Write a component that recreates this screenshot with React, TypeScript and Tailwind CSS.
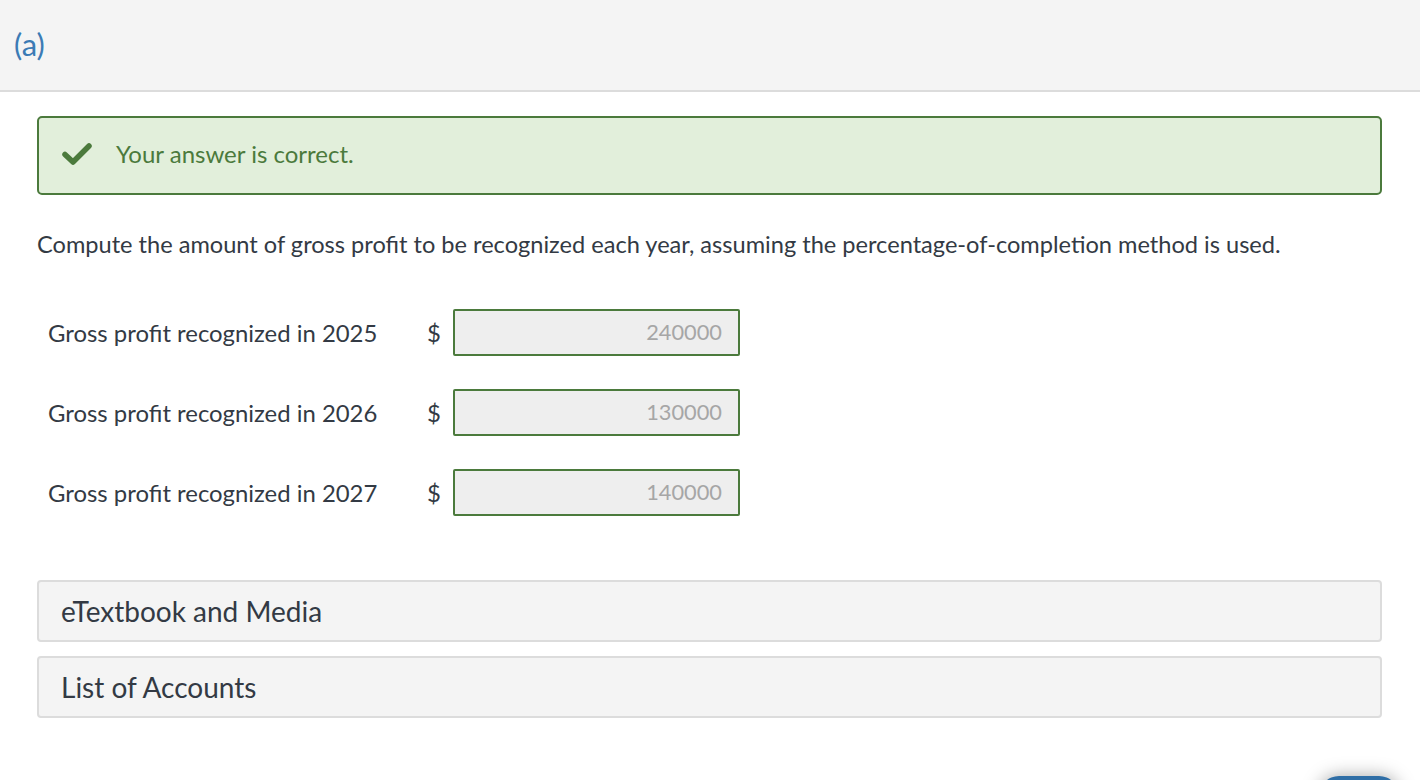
import React from 'react';

const rows = [
  { year: '2025', value: '240000' },
  { year: '2026', value: '130000' },
  { year: '2027', value: '140000' },
];

const CheckIcon = () => (
  <svg width="30" height="22" viewBox="0 0 30 22" aria-hidden="true">
    <path d="M3 11.5 L11 19 L27 3" fill="none" stroke="#4b7a3c" strokeWidth="5.5" strokeLinecap="round" strokeLinejoin="round" />
  </svg>
);

const App: React.FC = () => {
  return (
    <div className="relative h-[780px] w-[1420px] overflow-hidden bg-white text-[#333a44]" style={{ fontFamily: 'Lato, "Open Sans", sans-serif' }}>
      {/* Part header */}
      <div className="flex h-[92px] items-center border-b-2 border-[#dcdcdc] bg-[#f4f4f4] pl-[14px] pb-[2px]">
        <span className="text-[31px] text-[#3b7bb5]">(a)</span>
      </div>

      <div className="px-[37px] pr-[38px]">
        {/* Feedback */}
        <div className="mt-[24px] flex h-[79px] items-center rounded-[5px] border-2 border-[#4b7a3c] bg-[#e2efdb] pl-[23px] pb-[3px]">
          <CheckIcon />
          <span className="ml-[24px] text-[24px] text-[#4b7a3c]">Your answer is correct.</span>
        </div>

        <p className="mt-[33px] text-[23.6px] leading-[32px]">
          Compute the amount of gross profit to be recognized each year, assuming the percentage-of-completion method is used.
        </p>

        {/* Answer rows */}
        <div className="mt-[49px] flex flex-col gap-[33px] pl-[11px]">
          {rows.map((r) => (
            <div key={r.year} className="flex h-[47px] items-center">
              <span className="w-[379px] text-[23.9px]">Gross profit recognized in {r.year}</span>
              <span className="w-[26px] text-[23.9px]">$</span>
              <div className="flex h-[47px] w-[287px] items-center justify-end rounded-[2px] border-2 border-[#4b7a3c] bg-[#eeeeee] pr-[16px] text-[21.8px] text-[#a6a6a6]">
                {r.value}
              </div>
            </div>
          ))}
        </div>

        {/* Resources */}
        <div className="mt-[64px] flex flex-col gap-[14px]">
          <div className="flex h-[62px] items-center rounded-[4px] border-2 border-[#dcdcdc] bg-[#f4f4f4] pl-[22px] text-[28px]">
            eTextbook and Media
          </div>
          <div className="flex h-[62px] items-center rounded-[4px] border-2 border-[#dcdcdc] bg-[#f4f4f4] pl-[22px] text-[28px]">
            List of Accounts
          </div>
        </div>
      </div>

      {/* Floating button peeking at bottom */}
      <div className="absolute left-[1319px] top-[776px] h-[40px] w-[80px] rounded-[20px] bg-[#2f6ea6] shadow-[0_0_18px_rgba(0,0,0,0.35)]" />
    </div>
  );
};

export default App;
